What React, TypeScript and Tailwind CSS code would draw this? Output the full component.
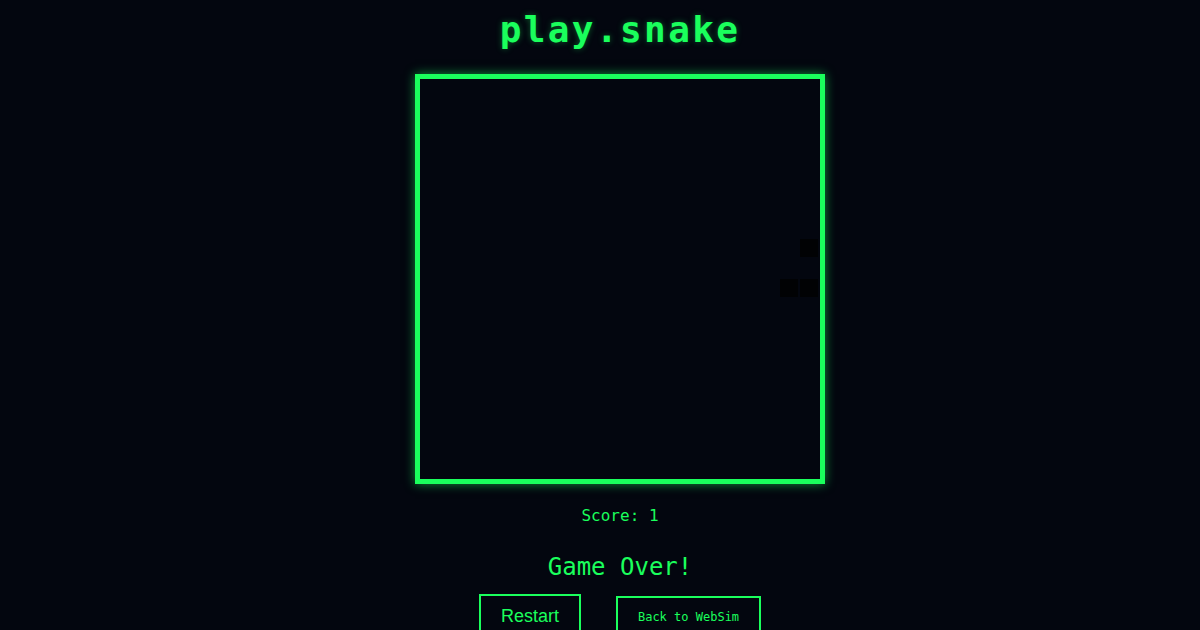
import React from 'react';

const CELL = 20;

// segments of the last snake position, in grid cells
const snake = [
  { x: 19, y: 8 },
  { x: 18, y: 10 },
  { x: 19, y: 10 },
];

export default function App() {
  return (
    <div className="min-h-screen w-full bg-[#03060f] pl-[40px] flex flex-col items-center font-['DejaVu_Sans_Mono',monospace] text-[#1aff5c]">
      <h1 className="mt-[8px] text-[36px] leading-[44px] font-bold tracking-[2.4px] [text-shadow:0_0_6px_rgba(26,255,92,0.35)]">
        play.snake
      </h1>

      {/* Board */}
      <div className="mt-[22px] w-[410px] h-[410px] border-[5px] border-[#1aff5c] shadow-[0_0_10px_rgba(26,255,92,0.55)] relative bg-[#03060f]">
        {snake.map((s, i) => (
          <div
            key={i}
            className="absolute w-[18px] h-[18px] bg-[#010204]"
            style={{ left: s.x * CELL, top: s.y * CELL }}
          />
        ))}
      </div>

      <div className="mt-[22px] text-[16px] leading-[20px]">Score: 1</div>

      <div className="mt-[26px] text-[24px] leading-[30px]">Game Over!</div>

      <div className="mt-[12px] flex items-start gap-[35px]">
        <button className="border-2 border-[#1aff5c] px-[20px] pt-[9px] pb-[10px] font-['Liberation_Sans',Arial,sans-serif] text-[18px] leading-[22px]">
          Restart
        </button>
        <button className="mt-[2px] border-2 border-[#1aff5c] px-[20px] pt-[11px] pb-[11px] text-[12px] leading-[16px]">
          Back to WebSim
        </button>
      </div>
    </div>
  );
}
